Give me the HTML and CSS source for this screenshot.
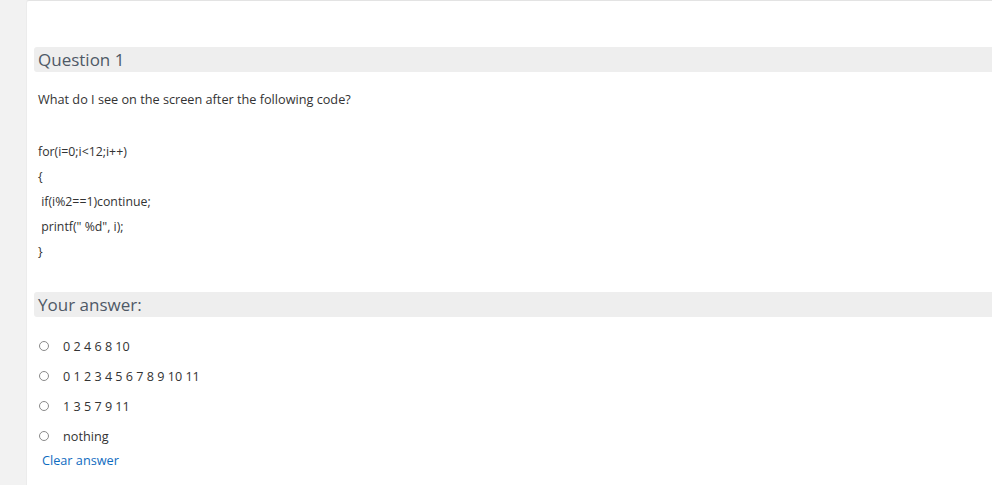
FILE: index.html
```html
<!DOCTYPE html>
<html>
<head>
<meta charset="utf-8">
<link rel="stylesheet" href="styles.css">
</head>
<body>
<div class="page">
  <div class="card">
    <h2 class="band q-title">Question 1</h2>
    <p class="qtext">What do I see on the screen after the following code?</p>
    <div class="code">
      <p>for(i=0;i&lt;12;i++)</p>
      <p>{</p>
      <p>&nbsp;if(i%2==1)continue;</p>
      <p>&nbsp;printf(" %d", i);</p>
      <p>}</p>
    </div>
    <h3 class="band answer-title">Your answer:</h3>
    <div class="options">
      <label class="opt"><span class="radio"></span><span class="num">0 2 4 6 8 10</span></label>
      <label class="opt"><span class="radio"></span><span class="num">0 1 2 3 4 5 6 7 8 9 10 11</span></label>
      <label class="opt"><span class="radio"></span><span class="num">1 3 5 7 9 11</span></label>
      <label class="opt"><span class="radio"></span><span class="word">nothing</span></label>
    </div>
    <a class="clear" href="#">Clear answer</a>
  </div>
</div>
</body>
</html>
```
FILE: styles.css
```css
html, body {
  margin: 0;
  padding: 0;
  height: 100%;
  overflow: hidden;
}
body {
  background: #f2f2f2;
  font-family: "Open Sans", "Liberation Sans", sans-serif;
  color: #333;
}
.page {
  padding-left: 26px;
  height: 100%;
}
.card {
  background: #fff;
  border-top: 1px solid #e3e3e3;
  border-left: 1px solid #ececec;
  border-top-left-radius: 3px;
  height: 100%;
  padding: 46px 0 0 7px;
  box-sizing: border-box;
}
.band {
  margin: 0;
  background: #eeeeee;
  border-radius: 3px 0 0 3px;
  height: 25px;
  line-height: 25px;
  padding-left: 4px;
  font-weight: normal;
  font-size: 17px;
  color: #4f5966;
}
.qtext {
  margin: 16px 0 0 4px;
  font-size: 12.7px;
  line-height: 22px;
  color: #333;
}
.code {
  margin: 29px 0 0 4px;
  font-size: 12.3px;
  color: #333;
}
.code p {
  margin: 0;
  height: 25px;
  line-height: 25px;
}
.answer-title {
  margin-top: 28px;
}
.options {
  margin: 14px 0 0 0;
  display: flex;
  flex-direction: column;
}
.opt {
  display: flex;
  align-items: center;
  height: 30px;
  padding-left: 5px;
}
.radio {
  width: 10px;
  height: 10px;
  border: 1px solid #8a8a8a;
  border-radius: 50%;
  box-sizing: border-box;
  margin-right: 14px;
  background: #fff;
}
.num {
  font-size: 12.6px;
  color: #333;
}
.word {
  font-size: 12.7px;
  color: #333;
}
.clear {
  display: block;
  margin: -1px 0 0 8px;
  font-size: 12.7px;
  color: #0f6cbf;
  text-decoration: none;
  line-height: 20px;
}
```
